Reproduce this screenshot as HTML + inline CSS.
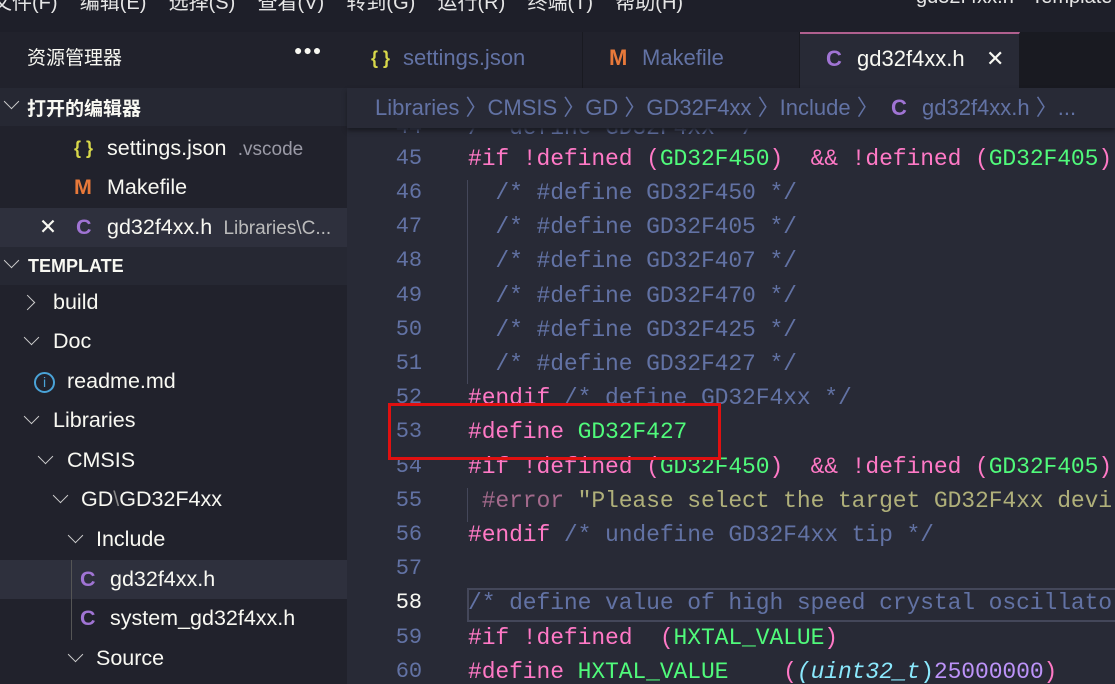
<!DOCTYPE html>
<html><head><meta charset="utf-8"><style>
*{margin:0;padding:0;box-sizing:border-box}
html,body{width:1115px;height:684px;overflow:hidden}
body{background:#282a36;font-family:"Liberation Sans","Noto Sans CJK SC",sans-serif;position:relative}
.abs{position:absolute;white-space:nowrap}
#menu{left:0;top:0;width:1115px;height:32px;background:#1e1f29;color:#e6e6e6;font-size:20px;overflow:hidden}
#side{left:0;top:32px;width:347px;height:652px;background:#21222c;overflow:hidden}
#tabs{left:347px;top:32px;width:768px;height:56px;background:#191a21}
.tab{position:absolute;top:0;height:56px;background:#21222c;color:#6272a4;font-size:22px;line-height:52px;border-right:1px solid #191a21}
.row{position:absolute;left:0;width:347px;height:39px;line-height:39px;font-size:21.5px;color:#f8f8f2}
.code{font-family:"Liberation Mono",monospace;font-size:23px;letter-spacing:-0.1px;white-space:pre;overflow:hidden}
.code div{white-space:pre}
.ln{position:absolute;left:360px;width:62px;text-align:right;color:#6272a4;font-family:"Liberation Mono",monospace;font-size:22px}
.cl{position:absolute;left:468px;color:#f8f8f2}
.k{color:#ff79c6}.g{color:#50fa7b}.c{color:#6272a4}.s{color:#b0b07a}.p{color:#bd93f9}.cy{color:#8be9fd;font-style:italic}
.ci{color:#a074d4;font-weight:bold}
.dn{position:absolute;width:11px;height:11px;border-right:1.5px solid #ccc;border-bottom:1.5px solid #ccc;transform:rotate(45deg)}
.rt{position:absolute;width:11px;height:11px;border-right:1.5px solid #ccc;border-bottom:1.5px solid #ccc;transform:rotate(-45deg)}
</style></head><body>
<div id="menu" class="abs"><span class="abs" style="left:-8px;top:-14px">文件(F)&nbsp;&nbsp;&nbsp;&nbsp;编辑(E)&nbsp;&nbsp;&nbsp;&nbsp;选择(S)&nbsp;&nbsp;&nbsp;&nbsp;查看(V)&nbsp;&nbsp;&nbsp;&nbsp;转到(G)&nbsp;&nbsp;&nbsp;&nbsp;运行(R)&nbsp;&nbsp;&nbsp;&nbsp;终端(T)&nbsp;&nbsp;&nbsp;&nbsp;帮助(H)</span><span class="abs" style="left:916px;top:-14px">gd32f4xx.h - Template</span></div>
<div id="side" class="abs">
<div class="abs" style="left:27px;top:11px;font-size:19px;color:#f8f8f2">资源管理器</div>
<div class="abs" style="left:294px;top:10px;font-size:14px;color:#f8f8f2;letter-spacing:1px">●●●</div>
<div class="abs" style="left:0;top:56px;width:347px;height:38px;background:#262833"></div>
<div class="dn" style="left:6px;top:64px"></div>
<div class="abs" style="left:27px;top:62px;font-size:19px;font-weight:bold;color:#f8f8f2">打开的编辑器</div>
<div class="row" style="top:97px"><span class="abs" style="left:74px;color:#d8d84a;font-weight:bold;font-size:18px">{ }</span><span class="abs" style="left:107px">settings.json <span style="color:#9a9aa6;font-size:19px">&nbsp;.vscode</span></span></div>
<div class="row" style="top:136px"><span class="abs" style="left:74px;color:#e8793a;font-weight:bold">M</span><span class="abs" style="left:107px">Makefile</span></div>
<div class="row" style="top:176px;background:#2e303d"><span class="abs" style="left:39px">✕</span><span class="abs ci" style="left:76px">C</span><span class="abs" style="left:107px">gd32f4xx.h <span style="color:#bbb;font-size:19px">&nbsp;Libraries\C...</span></span></div>
<div class="abs" style="left:0;top:215px;width:347px;height:38px;background:#262833"></div>
<div class="dn" style="left:6px;top:223px"></div>
<div class="abs" style="left:28px;top:224px;font-size:18px;font-weight:bold;color:#f8f8f2">TEMPLATE</div>
<div class="row" style="top:251px"><span class="rt" style="left:22px;top:14px"></span><span class="abs" style="left:53px">build</span></div>
<div class="row" style="top:290px"><span class="dn" style="left:26px;top:10px"></span><span class="abs" style="left:53px">Doc</span></div>
<div class="row" style="top:330px"><span class="abs" style="left:34px;top:10px;width:21px;height:21px;border:2px solid #4aa3d8;border-radius:50%;color:#4aa3d8;font-size:14px;line-height:17px;text-align:center">i</span><span class="abs" style="left:67px">readme.md</span></div>
<div class="row" style="top:369px"><span class="dn" style="left:26px;top:10px"></span><span class="abs" style="left:53px">Libraries</span></div>
<div class="row" style="top:409px"><span class="dn" style="left:40px;top:10px"></span><span class="abs" style="left:67px">CMSIS</span></div>
<div class="row" style="top:448px"><span class="dn" style="left:55px;top:10px"></span><span class="abs" style="left:81px">GD<span style="color:#888">\</span>GD32F4xx</span></div>
<div class="row" style="top:488px"><span class="dn" style="left:70px;top:10px"></span><span class="abs" style="left:96px">Include</span></div>
<div class="row" style="top:528px;background:#2e303d"><span class="abs ci" style="left:80px">C</span><span class="abs" style="left:110px">gd32f4xx.h</span></div>
<div class="row" style="top:567px"><span class="abs ci" style="left:80px">C</span><span class="abs" style="left:110px">system_gd32f4xx.h</span></div>
<div class="abs" style="left:71px;top:528px;width:1px;height:80px;background:#555"></div>
<div class="row" style="top:607px"><span class="dn" style="left:70px;top:10px"></span><span class="abs" style="left:96px">Source</span></div>
</div>
<div id="tabs" class="abs">
<div class="tab" style="left:0;width:236px"><span class="abs" style="left:24px;color:#d8d84a;font-weight:bold;font-size:18px">{ }</span><span class="abs" style="left:56px">settings.json</span></div>
<div class="tab" style="left:236px;width:217px"><span class="abs" style="left:26px;color:#e8793a;font-weight:bold">M</span><span class="abs" style="left:59px">Makefile</span></div>
<div class="tab" style="left:453px;width:220px;background:#282a36;border-top:2px solid #b0608f;color:#f8f8f2;line-height:50px"><span class="abs ci" style="left:26px">C</span><span class="abs" style="left:57px">gd32f4xx.h</span><span class="abs" style="left:186px">✕</span></div>
</div>
<div class="abs" style="left:347px;top:88px;width:768px;height:40px;background:#282a36;box-shadow:0 3px 4px #1a1b22;z-index:2;color:#6272a4;font-size:22px;line-height:40px;overflow:hidden">
<span class="abs" style="left:28px">Libraries 〉CMSIS 〉GD 〉GD32F4xx 〉Include 〉</span><span class="abs ci" style="left:544px">C</span><span class="abs" style="left:575px">gd32f4xx.h 〉...</span></div>
<div class="code" style="position:absolute;left:0;top:0;width:1115px;height:684px">
<div style="position:absolute;left:0;top:4px;width:1115px;height:680px">
<div class="ln" style="top:111px">44</div><div class="cl c" style="top:111px">/* define GD32F4xx */</div>
<div class="ln" style="top:142px">45</div><div class="cl" style="top:142px"><span class="k">#if !defined (</span><span class="g">GD32F450</span><span class="k">)  &amp;&amp; !defined (</span><span class="g">GD32F405</span><span class="k">)</span></div>
<div class="ln" style="top:176px">46</div><div class="cl c" style="top:176px">  /* #define GD32F450 */</div>
<div class="ln" style="top:210px">47</div><div class="cl c" style="top:210px">  /* #define GD32F405 */</div>
<div class="ln" style="top:244px">48</div><div class="cl c" style="top:244px">  /* #define GD32F407 */</div>
<div class="ln" style="top:279px">49</div><div class="cl c" style="top:279px">  /* #define GD32F470 */</div>
<div class="ln" style="top:313px">50</div><div class="cl c" style="top:313px">  /* #define GD32F425 */</div>
<div class="ln" style="top:347px">51</div><div class="cl c" style="top:347px">  /* #define GD32F427 */</div>
<div class="abs" style="left:467px;top:176px;width:1px;height:204px;background:#44475a"></div>
<div class="ln" style="top:381px">52</div><div class="cl" style="top:381px"><span class="k">#endif</span> <span class="c">/* define GD32F4xx */</span></div>
<div class="ln" style="top:415px">53</div><div class="cl" style="top:415px"><span class="k">#define</span> <span class="g">GD32F427</span></div>
<div class="ln" style="top:450px">54</div><div class="cl" style="top:450px"><span class="k">#if !defined (</span><span class="g">GD32F450</span><span class="k">)  &amp;&amp; !defined (</span><span class="g">GD32F405</span><span class="k">)</span></div>
<div class="ln" style="top:484px">55</div><div class="cl" style="top:484px"> <span style="color:#a36a8c">#error</span> <span class="s">"Please select the target GD32F4xx devi</span></div>
<div class="abs" style="left:467px;top:484px;width:1px;height:34px;background:#44475a"></div>
<div class="ln" style="top:518px">56</div><div class="cl" style="top:518px"><span class="k">#endif</span> <span class="c">/* undefine GD32F4xx tip */</span></div>
<div class="ln" style="top:552px">57</div>
<div class="abs" style="left:467px;top:584px;width:660px;height:34px;border:2px solid #44475a"></div>
<div class="ln" style="top:586px;color:#f8f8f2">58</div><div class="cl c" style="top:586px">/* define value of high speed crystal oscillato</div>
<div class="ln" style="top:621px">59</div><div class="cl" style="top:621px"><span class="k">#if !defined  (</span><span class="g">HXTAL_VALUE</span><span class="k">)</span></div>
<div class="ln" style="top:655px">60</div><div class="cl" style="top:655px"><span class="k">#define</span> <span class="g">HXTAL_VALUE</span>    <span class="k">(</span><span class="cy">(uint32_t</span><span class="cy" style="font-style:normal">)</span><span class="p">25000000</span><span class="k">)</span></div>
</div>
</div>
<div class="abs" style="left:388px;top:403px;width:333px;height:57px;border:3px solid #e01010;z-index:3"></div>
</body></html>
